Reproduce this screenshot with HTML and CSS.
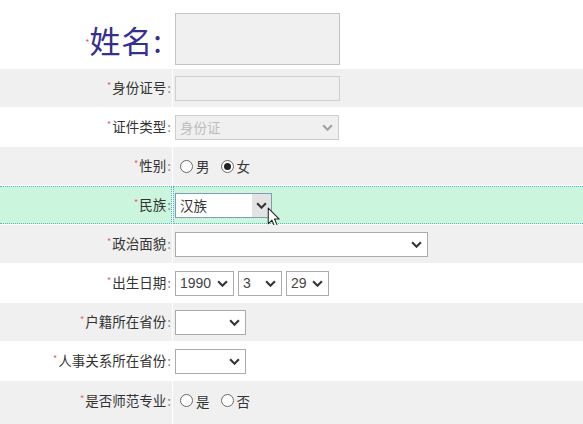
FILE: index.html
```html
<!DOCTYPE html>
<html lang="zh-CN">
<head>
<meta charset="utf-8">
<title>表单</title>
<link rel="stylesheet" href="styles.css">
</head>
<body>
<div class="form">
  <div class="row row-name">
    <div class="lbl"><span class="req req-big">*</span><span class="big">姓名:</span></div>
    <div class="fld"><div class="input input-name"></div></div>
  </div>
  <div class="row alt">
    <div class="lbl"><span class="req">*</span>身份证号<span class="colon">:</span></div>
    <div class="fld"><div class="input input-id"></div></div>
  </div>
  <div class="row">
    <div class="lbl"><span class="req">*</span>证件类型<span class="colon">:</span></div>
    <div class="fld">
      <div class="select disabled w-type"><span class="val">身份证</span><svg class="chev" viewBox="0 0 10 6"><path d="M1 1 L5 5 L9 1"/></svg></div>
    </div>
  </div>
  <div class="row alt">
    <div class="lbl"><span class="req">*</span>性别<span class="colon">:</span></div>
    <div class="fld radios">
      <label class="opt"><span class="radio"></span>男</label>
      <label class="opt"><span class="radio checked"></span>女</label>
    </div>
  </div>
  <div class="row hover">
    <div class="lbl"><span class="req">*</span>民族<span class="colon">:</span></div>
    <div class="fld">
      <div class="select active w-nation"><span class="val">汉族</span><span class="btn"><svg class="chev" viewBox="0 0 10 6"><path d="M1 1 L5 5 L9 1"/></svg></span></div>
      <svg class="cursor" viewBox="0 0 12 20"><path d="M1 1 L1 16 L4.5 12.5 L7 18.5 L9.5 17.5 L7 11.5 L11.5 11.5 Z"/></svg>
    </div>
  </div>
  <div class="row alt">
    <div class="lbl"><span class="req">*</span>政治面貌<span class="colon">:</span></div>
    <div class="fld">
      <div class="select w-party"><span class="val"></span><svg class="chev" viewBox="0 0 10 6"><path d="M1 1 L5 5 L9 1"/></svg></div>
    </div>
  </div>
  <div class="row">
    <div class="lbl"><span class="req">*</span>出生日期<span class="colon">:</span></div>
    <div class="fld dates">
      <div class="select num w-year"><span class="val">1990</span><svg class="chev" viewBox="0 0 10 6"><path d="M1 1 L5 5 L9 1"/></svg></div>
      <div class="select num w-month"><span class="val">3</span><svg class="chev" viewBox="0 0 10 6"><path d="M1 1 L5 5 L9 1"/></svg></div>
      <div class="select num w-day"><span class="val">29</span><svg class="chev" viewBox="0 0 10 6"><path d="M1 1 L5 5 L9 1"/></svg></div>
    </div>
  </div>
  <div class="row alt">
    <div class="lbl"><span class="req">*</span>户籍所在省份<span class="colon">:</span></div>
    <div class="fld">
      <div class="select w-prov"><span class="val"></span><svg class="chev" viewBox="0 0 10 6"><path d="M1 1 L5 5 L9 1"/></svg></div>
    </div>
  </div>
  <div class="row">
    <div class="lbl"><span class="req">*</span>人事关系所在省份<span class="colon">:</span></div>
    <div class="fld">
      <div class="select w-prov"><span class="val"></span><svg class="chev" viewBox="0 0 10 6"><path d="M1 1 L5 5 L9 1"/></svg></div>
    </div>
  </div>
  <div class="row alt last">
    <div class="lbl"><span class="req">*</span>是否师范专业<span class="colon">:</span></div>
    <div class="fld radios">
      <label class="opt"><span class="radio"></span>是</label>
      <label class="opt"><span class="radio"></span>否</label>
    </div>
  </div>
</div>
</body>
</html>
```

FILE: styles.css
```css
* { box-sizing: border-box; }
html, body { margin: 0; padding: 0; background: #fff; }
body {
  font-family: "Noto Sans CJK SC", "Microsoft YaHei", sans-serif;
  font-size: 13.5px;
  color: #333;
  overflow: hidden;
}
.form {
  display: flex;
  flex-direction: column;
  row-gap: 1px;
  width: 583px;
}
.row {
  display: grid;
  grid-template-columns: 172px 1fr;
  column-gap: 1px;
  height: 38px;
}
.row.last { height: 43px; }
.row.alt .lbl, .row.alt .fld { background: #f0f0f0; }
.row.hover .lbl, .row.hover .fld {
  background: #cbf6dd;
  border-top: 1px dotted #58b9c4;
  border-bottom: 1px dotted #58b9c4;
}
.row.hover .lbl { border-right: 1px dotted #58b9c4; padding-right: 0; }
.row.hover .fld { border-left: 1px dotted #58b9c4; padding-left: 1px; }
.lbl {
  display: flex;
  align-items: center;
  justify-content: flex-end;
  padding-right: 1px;
  white-space: nowrap;
  line-height: 1;
}
.row.last .lbl, .row.last .fld { padding-bottom: 4px; }
.fld {
  display: flex;
  align-items: center;
  padding-left: 2px;
  position: relative;
}
.req {
  color: #e06060;
  font-size: 9px;
  align-self: center;
  margin-top: -5px;
  margin-right: 1px;
}
.colon { color: #888; margin-left: 1px; }

/* name row */
.row-name { height: 68px; }
.row-name .lbl, .row-name .fld { padding-top: 10px; }
.row-name .lbl { padding-right: 9px; }
.big {
  font-size: 31px;
  color: #35308f;
  letter-spacing: 1px;
}
.req-big { margin-top: 6px; margin-right: 0; }

.input {
  background: #f0f0f0;
  border: 1px solid #c4c4c4;
}
.input-name { width: 165px; height: 52px; }
.input-id { width: 165px; height: 25px; border-color: #cfcfcf; }

/* select */
.select {
  display: flex;
  align-items: center;
  height: 25px;
  border: 1px solid #ababab;
  background: #fff;
  padding-left: 4px;
  padding-right: 5px;
}
.select .val { flex: 1; white-space: nowrap; }
.select.num .val { font-family: "Liberation Sans", Arial, sans-serif; font-size: 14px; color: #444; }
.chev {
  width: 11px;
  height: 7px;
  flex: none;
  fill: none;
  stroke: #333;
  stroke-width: 1.9;
}
.select.disabled { background: #f0f0f0; border-color: #cdcdcd; }
.select.disabled .val { color: #bdbdbd; }
.select.disabled .chev { stroke: #a0a0a0; }
.select.active {
  border-color: #7c9fb8;
  padding-right: 0;
}
.select.active .btn {
  align-self: stretch;
  width: 19px;
  display: flex;
  align-items: center;
  justify-content: center;
  background: #e3e3e3;
}
.w-type { width: 164px; }
.w-nation { width: 97px; }
.w-party { width: 253px; }
.w-year { width: 59px; }
.w-month { width: 44px; }
.w-day { width: 43px; }
.w-prov { width: 71px; }
.dates { column-gap: 4px; }

/* radios */
.radios { padding-left: 7px; column-gap: 11px; }
.opt { display: flex; align-items: center; column-gap: 3px; }
.radio {
  width: 13px;
  height: 13px;
  border-radius: 50%;
  border: 1px solid #6a6a6a;
  background: #fff;
  display: inline-flex;
  align-items: center;
  justify-content: center;
}
.radio.checked::after {
  content: "";
  width: 7px;
  height: 7px;
  border-radius: 50%;
  background: #222;
}

.cursor {
  position: absolute;
  left: 93px;
  top: 20px;
  width: 13px;
  height: 21px;
  fill: #fff;
  stroke: #222;
  stroke-width: 1;
  stroke-linejoin: round;
}
```
